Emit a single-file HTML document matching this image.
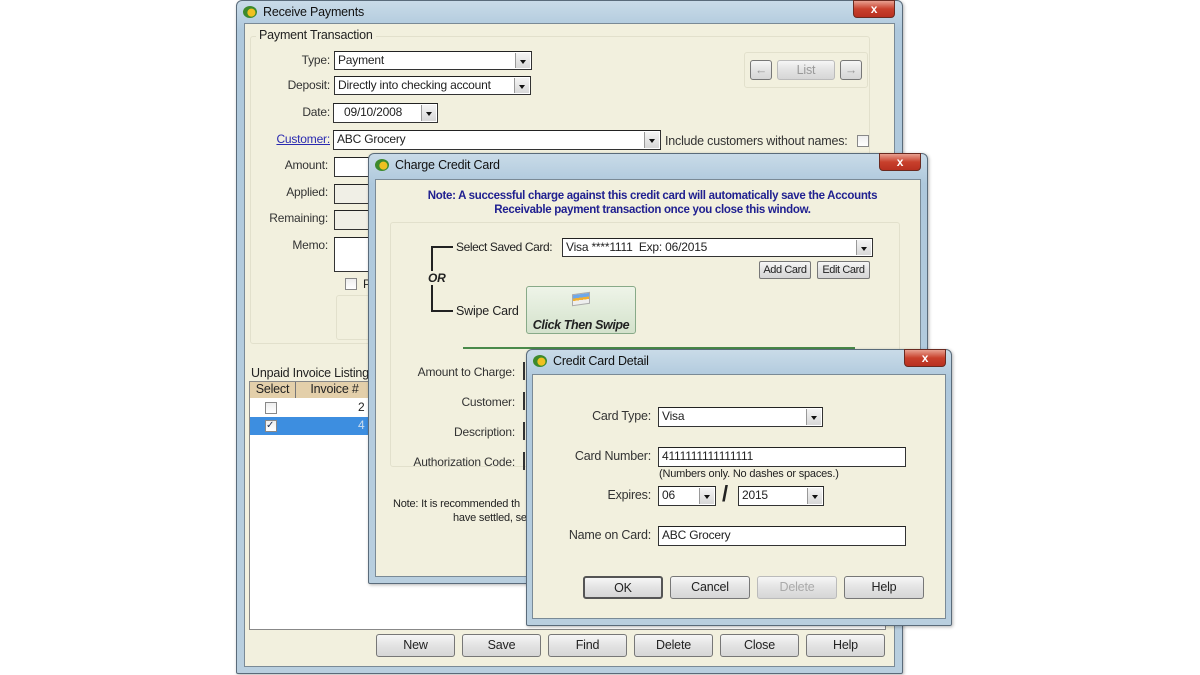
<!DOCTYPE html>
<html><head><meta charset="utf-8"><style>
*{box-sizing:border-box;margin:0;padding:0}
body{width:1200px;height:675px;background:#fff;position:relative;overflow:hidden;font-family:"Liberation Sans",sans-serif;font-size:12px;color:#222;white-space:nowrap;letter-spacing:-0.2px}
.a{position:absolute}
.win{position:absolute;background:linear-gradient(#c9dbe8,#aec8dc 30px,#b9cfdf);border:1px solid #5a6b7a;border-radius:6px 6px 2px 2px;box-shadow:1px 1px 3px rgba(0,0,0,.3)}
.title{position:absolute;left:26px;top:4px;font-size:12.5px;color:#111}
.icon{position:absolute;left:6px;top:5px;width:14px;height:12px;border-radius:50%;background:radial-gradient(circle at 60% 55%,#f0c020 35%,#3d8a2c 40%)}
.close{position:absolute;top:-1px;width:42px;height:18px;border-radius:0 0 4px 4px;background:linear-gradient(#e8a090,#c8402c 50%,#b83020);border:1px solid #6a2a20;color:#fff;font-size:12px;font-weight:bold;text-align:center;line-height:16px}
.body{position:absolute;background:#f2f0de;border:1px solid #7a8a96}
.lbl{position:absolute;text-align:right;font-size:12px;color:#333}
.inp{position:absolute;background:#fff;border:1px solid #333;border-top-color:#222;font-size:12px;padding:1px 3px;line-height:15px;white-space:nowrap;overflow:hidden}
.dis{background:#f0efe6}
.dd{position:absolute;right:1px;top:1px;bottom:1px;width:15px;background:linear-gradient(#f4f4f4,#d8d8d8);border-left:1px solid #999}
.dd:after{content:"";position:absolute;left:4px;top:7px;border:3px solid transparent;border-top:4px solid #111}
.btn{position:absolute;height:23px;border:1px solid #777;border-radius:3px;background:linear-gradient(#f6f6f6,#e3e3e3 50%,#d6d6d6);text-align:center;line-height:21px;font-size:12.5px;color:#222}
.grp{position:absolute;border:1px solid #e2e0cc;border-radius:3px}
.cb{position:absolute;width:12px;height:12px;border:1px solid #888;background:linear-gradient(#eee,#fff)}
</style></head><body>

<!-- Receive Payments -->
<div class="win" style="left:236px;top:0;width:667px;height:674px">
 <div class="icon"></div><div class="title">Receive Payments</div>
 <div class="close" style="left:616px">x</div>
 <div class="body" style="left:7px;top:22px;width:651px;height:644px"></div>
</div>
<div class="grp" style="left:250px;top:36px;width:620px;height:308px"></div>
<div class="a" style="left:256px;top:28px;font-size:12.5px;background:#f2f0de;padding:0 3px">Payment Transaction</div>

<div class="lbl" style="left:260px;top:53px;width:70px">Type:</div>
<div class="inp" style="left:334px;top:51px;width:198px;height:19px">Payment<div class="dd"></div></div>
<div class="lbl" style="left:260px;top:78px;width:70px">Deposit:</div>
<div class="inp" style="left:334px;top:76px;width:197px;height:19px">Directly into checking account<div class="dd"></div></div>
<div class="lbl" style="left:260px;top:105px;width:70px">Date:</div>
<div class="inp" style="left:333px;top:103px;width:105px;height:20px;padding-left:10px">09/10/2008<div class="dd"></div></div>
<div class="lbl" style="left:260px;top:132px;width:70px;color:#2a2ab0;text-decoration:underline">Customer:</div>
<div class="inp" style="left:333px;top:130px;width:328px;height:20px">ABC Grocery<div class="dd"></div></div>
<div class="a" style="left:665px;top:134px;font-size:12.5px;color:#333">Include customers without names:</div>
<div class="cb" style="left:857px;top:135px"></div>

<div class="grp" style="left:744px;top:52px;width:124px;height:36px"></div>
<div class="btn" style="left:750px;top:60px;width:22px;height:20px;color:#999;line-height:18px">&#8592;</div>
<div class="btn" style="left:777px;top:60px;width:58px;height:20px;color:#999;line-height:18px;border-color:#bbb">List</div>
<div class="btn" style="left:840px;top:60px;width:22px;height:20px;color:#999;line-height:18px">&#8594;</div>

<div class="lbl" style="left:260px;top:158px;width:68px">Amount:</div>
<div class="inp" style="left:334px;top:157px;width:40px;height:20px"></div>
<div class="lbl" style="left:260px;top:185px;width:68px">Applied:</div>
<div class="inp dis" style="left:334px;top:184px;width:40px;height:20px"></div>
<div class="lbl" style="left:260px;top:211px;width:68px">Remaining:</div>
<div class="inp dis" style="left:334px;top:210px;width:40px;height:20px"></div>
<div class="lbl" style="left:260px;top:238px;width:68px">Memo:</div>
<div class="inp" style="left:334px;top:237px;width:40px;height:35px"></div>
<div class="cb" style="left:345px;top:278px"></div>
<div class="a" style="left:363px;top:277px">P</div>
<div class="grp" style="left:336px;top:295px;width:40px;height:45px"></div>

<div class="a" style="left:251px;top:366px;font-size:12.5px">Unpaid Invoice Listing</div>
<div class="a" style="left:249px;top:381px;width:637px;height:249px;background:#fff;border:1px solid #888"></div>
<div class="a" style="left:250px;top:382px;width:635px;height:16px;background:#e3cfaa"></div>
<div class="a" style="left:250px;top:382px;width:46px;height:16px;border-right:1px solid #777;text-align:center;font-size:12.5px;line-height:15px">Select</div>
<div class="a" style="left:297px;top:382px;width:75px;height:16px;text-align:center;font-size:12.5px;line-height:15px">Invoice #</div>
<div class="cb" style="left:265px;top:402px"></div>
<div class="a" style="left:358px;top:400px">2</div>
<div class="a" style="left:250px;top:417px;width:635px;height:18px;background:#3d8ee0"></div>
<div class="cb" style="left:265px;top:420px;font-size:10px;line-height:9px;color:#235">&#10003;</div>
<div class="a" style="left:358px;top:418px;color:#cde">4</div>

<div class="btn" style="left:376px;top:634px;width:79px">New</div>
<div class="btn" style="left:462px;top:634px;width:79px">Save</div>
<div class="btn" style="left:548px;top:634px;width:79px">Find</div>
<div class="btn" style="left:634px;top:634px;width:79px">Delete</div>
<div class="btn" style="left:720px;top:634px;width:79px">Close</div>
<div class="btn" style="left:806px;top:634px;width:79px">Help</div>

<!-- Charge Credit Card -->
<div class="win" style="left:368px;top:153px;width:560px;height:431px">
 <div class="icon"></div><div class="title">Charge Credit Card</div>
 <div class="close" style="left:510px">x</div>
 <div class="body" style="left:6px;top:25px;width:546px;height:398px"></div>
</div>
<div class="a" style="left:380px;top:189px;width:545px;text-align:center;font-weight:bold;color:#202090;font-size:11.5px;line-height:14px;letter-spacing:-0.3px">Note: A successful charge against this credit card will automatically save the Accounts<br>Receivable payment transaction once you close this window.</div>
<div class="grp" style="left:390px;top:222px;width:510px;height:245px"></div>
<div class="a" style="left:431px;top:246px;width:22px;height:66px;border:2px solid #222;border-right:none"></div>
<div class="a" style="left:426px;top:271px;font-weight:bold;font-style:italic;background:#f2f0de;padding:0 2px">OR</div>
<div class="a" style="left:456px;top:240px;font-size:12px;letter-spacing:-0.4px">Select Saved Card:</div>
<div class="inp" style="left:562px;top:238px;width:311px;height:19px">Visa ****1111&nbsp; Exp: 06/2015<div class="dd"></div></div>
<div class="btn" style="left:759px;top:261px;width:52px;height:18px;line-height:16px;font-size:11px;border-radius:2px;letter-spacing:-0.4px">Add Card</div>
<div class="btn" style="left:817px;top:261px;width:53px;height:18px;line-height:16px;font-size:11px;border-radius:2px;letter-spacing:-0.4px">Edit Card</div>
<div class="a" style="left:456px;top:304px;font-size:12.5px">Swipe Card</div>
<div class="a" style="left:526px;top:286px;width:110px;height:48px;border:1px solid #8a8;border-radius:3px;background:linear-gradient(#eef4e8,#d4e2cc)"></div>
<div class="a" style="left:572px;top:293px;width:18px;height:12px;background:linear-gradient(#6ea8e8 35%,#f0b030 35%,#f0b030 60%,#eee 60%);border:1px solid #aaa;transform:skewY(-8deg)"></div>
<div class="a" style="left:526px;top:318px;width:110px;text-align:center;font-weight:bold;font-style:italic;font-size:12.5px;letter-spacing:-0.4px">Click Then Swipe</div>
<div class="a" style="left:463px;top:347px;width:392px;height:2px;background:#4a8a4a"></div>
<div class="lbl" style="left:380px;top:365px;width:135px">Amount to Charge:</div>
<div class="lbl" style="left:380px;top:395px;width:135px">Customer:</div>
<div class="lbl" style="left:380px;top:425px;width:135px">Description:</div>
<div class="lbl" style="left:380px;top:455px;width:135px">Authorization Code:</div>
<div class="a" style="left:523px;top:362px;width:2px;height:18px;background:#333"></div>
<div class="a" style="left:523px;top:392px;width:2px;height:18px;background:#333"></div>
<div class="a" style="left:523px;top:422px;width:2px;height:18px;background:#333"></div>
<div class="a" style="left:523px;top:452px;width:2px;height:18px;background:#333"></div>
<div class="a" style="left:393px;top:497px;font-size:11px;line-height:14px">Note: It is recommended th<br><span style="padding-left:60px">have settled, se</span></div>

<!-- Credit Card Detail -->
<div class="win" style="left:526px;top:349px;width:426px;height:277px">
 <div class="icon"></div><div class="title">Credit Card Detail</div>
 <div class="close" style="left:377px">x</div>
 <div class="body" style="left:5px;top:24px;width:414px;height:245px"></div>
</div>
<div class="lbl" style="left:540px;top:409px;width:111px;font-size:12.5px">Card Type:</div>
<div class="inp" style="left:658px;top:407px;width:165px;height:20px">Visa<div class="dd"></div></div>
<div class="lbl" style="left:540px;top:449px;width:111px;font-size:12.5px">Card Number:</div>
<div class="inp" style="left:658px;top:447px;width:248px;height:20px">4111111111111111</div>
<div class="a" style="left:659px;top:468px;font-size:11px">(Numbers only. No dashes or spaces.)</div>
<div class="lbl" style="left:540px;top:488px;width:111px;font-size:12.5px">Expires:</div>
<div class="inp" style="left:658px;top:486px;width:58px;height:20px">06<div class="dd"></div></div>
<div class="a" style="left:722px;top:481px;font-size:22px;font-weight:bold">/</div>
<div class="inp" style="left:738px;top:486px;width:86px;height:20px">2015<div class="dd"></div></div>
<div class="lbl" style="left:540px;top:528px;width:111px;font-size:12.5px">Name on Card:</div>
<div class="inp" style="left:658px;top:526px;width:248px;height:20px">ABC Grocery</div>
<div class="btn" style="left:583px;top:576px;width:80px;border:2px solid #555">OK</div>
<div class="btn" style="left:670px;top:576px;width:80px">Cancel</div>
<div class="btn" style="left:757px;top:576px;width:80px;color:#aaa;border-color:#bbb">Delete</div>
<div class="btn" style="left:844px;top:576px;width:80px">Help</div>
</body></html>
